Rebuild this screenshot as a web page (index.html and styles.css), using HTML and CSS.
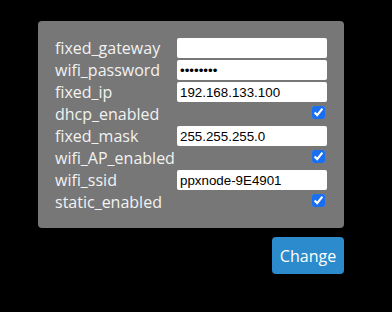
FILE: index.html
```html
<!DOCTYPE html>
<html>
<head>
<meta charset="utf-8">
<link rel="stylesheet" href="styles.css">
</head>
<body>
<div class="wrap">
  <form class="panel">
    <label class="lbl">fixed_gateway</label><input class="txt" type="text" value="">
    <label class="lbl">wifi_password</label><input class="txt" type="password" value="12345678">
    <label class="lbl">fixed_ip</label><input class="txt" type="text" value="192.168.133.100">
    <label class="lbl">dhcp_enabled</label><span class="chk"><input type="checkbox" checked></span>
    <label class="lbl">fixed_mask</label><input class="txt" type="text" value="255.255.255.0">
    <label class="lbl">wifi_AP_enabled</label><span class="chk"><input type="checkbox" checked></span>
    <label class="lbl">wifi_ssid</label><input class="txt" type="text" value="ppxnode-9E4901">
    <label class="lbl">static_enabled</label><span class="chk"><input type="checkbox" checked></span>
  </form>
  <button class="btn" type="button">Change</button>
</div>
</body>
</html>
```
FILE: styles.css
```css
html, body {
  margin: 0;
  padding: 0;
  background: #000;
}
.wrap {
  display: flex;
  flex-direction: column;
  width: 306px;
  margin: 21px 0 0 38px;
}
.panel {
  box-sizing: border-box;
  width: 306px;
  margin: 0;
  padding: 16px 17px 15px 17px;
  background: #777777;
  border-radius: 4px;
  display: grid;
  grid-template-columns: 122px 150px;
  grid-auto-rows: 22px;
  align-items: center;
}
.lbl {
  font-family: "Open Sans", sans-serif;
  font-size: 16px;
  line-height: 22px;
  color: #f2f2f2;
  white-space: nowrap;
}
.txt {
  box-sizing: border-box;
  width: 150px;
  height: 20px;
  margin: 0;
  padding: 0 3px;
  border: none;
  border-radius: 2px;
  background: #fff;
  font-family: "Liberation Sans", Arial, sans-serif;
  font-size: 13.33px;
  color: #000;
  outline: none;
}
.chk {
  display: flex;
  justify-content: flex-end;
  align-items: center;
  height: 22px;
}
.chk input {
  width: 13px;
  height: 13px;
  margin: 0 2px 3px 0;
  accent-color: #1a6ff0;
}
.btn {
  align-self: flex-end;
  margin-top: 9px;
  width: 72px;
  height: 37px;
  padding: 0;
  border: none;
  border-radius: 4px;
  background: #2b8bcc;
  color: #fff;
  font-family: "Open Sans", sans-serif;
  font-size: 16px;
}
```
